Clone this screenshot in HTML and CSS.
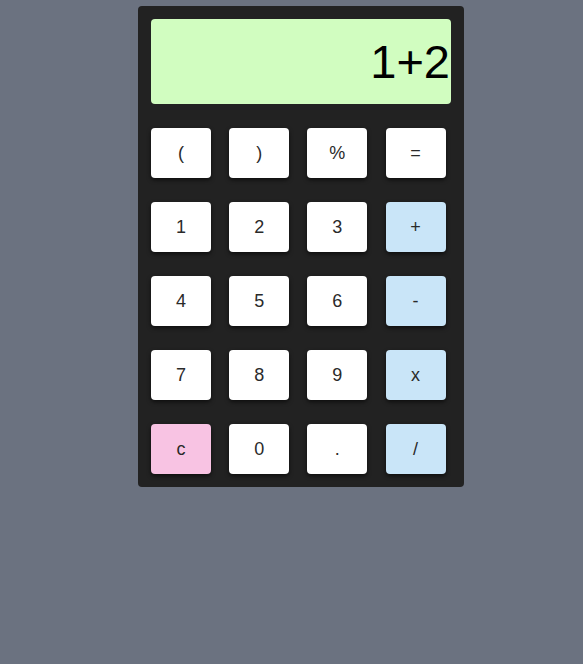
FILE: index.html
```html
<!DOCTYPE html>
<html lang="en">
  <head>
    <meta charset="UTF-8" />
    <meta name="viewport" content="width=device-width, initial-scale=1.0" />
    <title>Calculator</title>
    <link rel="stylesheet" href="styles.css">
  </head>
  <body>
    <div class="calculator">
      <div class="display">1+2</div>
      <div class="keys">
        <button>(</button>
        <button>)</button>
        <button>%</button>
        <button>=</button>
        <button>1</button>
        <button>2</button>
        <button>3</button>
        <button class="op">+</button>
        <button>4</button>
        <button>5</button>
        <button>6</button>
        <button class="op">-</button>
        <button>7</button>
        <button>8</button>
        <button>9</button>
        <button class="op">x</button>
        <button class="clear">c</button>
        <button>0</button>
        <button>.</button>
        <button class="op">/</button>
      </div>
    </div>
  </body>
</html>
```

FILE: styles.css
```css
body {
  font-family: 'Liberation Sans', Arial, sans-serif;
  margin: 0;
  padding: 6px 0 0;
  background-color: #6b7280;
}

.calculator {
  width: 300px;
  margin: 0 0 0 138px;
  padding: 13px;
  background-color: #222222;
  border-radius: 4px;
}

.display {
  height: 85px;
  display: flex;
  align-items: center;
  justify-content: flex-end;
  background-color: #d1fdc0;
  border-radius: 4px;
  font-size: 47px;
  color: #000;
  padding-right: 1px;
  box-sizing: border-box;
  overflow: hidden;
}

.keys {
  display: grid;
  grid-template-columns: repeat(4, 60px);
  column-gap: 18.2px;
  row-gap: 24px;
  margin-top: 24px;
}

button {
  height: 50px;
  border: none;
  border-radius: 4px;
  background-color: white;
  color: #2a2a2a;
  font-family: 'Liberation Sans', Arial, sans-serif;
  font-size: 18px;
  padding: 0;
  box-shadow: 0 2px 4px rgba(0, 0, 0, 0.6);
  cursor: pointer;
}

button.op {
  background-color: #c9e5f8;
}

button.clear {
  background-color: #f8c3e3;
}
```
